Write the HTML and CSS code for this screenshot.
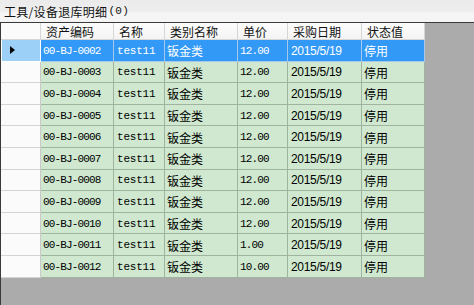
FILE: index.html
```html
<!DOCTYPE html>
<html lang="zh-CN">
<head>
  <meta charset="UTF-8">
  <title>工具/设备退库明细</title>
  <link rel="stylesheet" href="styles.css">
</head>
<body>
  <!-- Title bar -->
  <div class="title-bar">工具/设备退库明细<span class="count">(0)</span></div>

  <!-- Data grid -->
  <div class="grid">
    <div class="row header-row">
      <div class="row-head"></div>
      <div class="cell">资产编码</div>
      <div class="cell">名称</div>
      <div class="cell">类别名称</div>
      <div class="cell">单价</div>
      <div class="cell">采购日期</div>
      <div class="cell">状态值</div>
    </div>

    <div class="row data-row selected">
      <div class="row-head"><span class="pointer"></span></div>
      <div class="cell code">00-BJ-0002</div>
      <div class="cell name">test11</div>
      <div class="cell">钣金类</div>
      <div class="cell code">12.00</div>
      <div class="cell date">2015/5/19</div>
      <div class="cell">停用</div>
    </div>
    <div class="row data-row">
      <div class="row-head"></div>
      <div class="cell code">00-BJ-0003</div>
      <div class="cell name">test11</div>
      <div class="cell">钣金类</div>
      <div class="cell code">12.00</div>
      <div class="cell date">2015/5/19</div>
      <div class="cell">停用</div>
    </div>
    <div class="row data-row">
      <div class="row-head"></div>
      <div class="cell code">00-BJ-0004</div>
      <div class="cell name">test11</div>
      <div class="cell">钣金类</div>
      <div class="cell code">12.00</div>
      <div class="cell date">2015/5/19</div>
      <div class="cell">停用</div>
    </div>
    <div class="row data-row">
      <div class="row-head"></div>
      <div class="cell code">00-BJ-0005</div>
      <div class="cell name">test11</div>
      <div class="cell">钣金类</div>
      <div class="cell code">12.00</div>
      <div class="cell date">2015/5/19</div>
      <div class="cell">停用</div>
    </div>
    <div class="row data-row">
      <div class="row-head"></div>
      <div class="cell code">00-BJ-0006</div>
      <div class="cell name">test11</div>
      <div class="cell">钣金类</div>
      <div class="cell code">12.00</div>
      <div class="cell date">2015/5/19</div>
      <div class="cell">停用</div>
    </div>
    <div class="row data-row">
      <div class="row-head"></div>
      <div class="cell code">00-BJ-0007</div>
      <div class="cell name">test11</div>
      <div class="cell">钣金类</div>
      <div class="cell code">12.00</div>
      <div class="cell date">2015/5/19</div>
      <div class="cell">停用</div>
    </div>
    <div class="row data-row">
      <div class="row-head"></div>
      <div class="cell code">00-BJ-0008</div>
      <div class="cell name">test11</div>
      <div class="cell">钣金类</div>
      <div class="cell code">12.00</div>
      <div class="cell date">2015/5/19</div>
      <div class="cell">停用</div>
    </div>
    <div class="row data-row">
      <div class="row-head"></div>
      <div class="cell code">00-BJ-0009</div>
      <div class="cell name">test11</div>
      <div class="cell">钣金类</div>
      <div class="cell code">12.00</div>
      <div class="cell date">2015/5/19</div>
      <div class="cell">停用</div>
    </div>
    <div class="row data-row">
      <div class="row-head"></div>
      <div class="cell code">00-BJ-0010</div>
      <div class="cell name">test11</div>
      <div class="cell">钣金类</div>
      <div class="cell code">12.00</div>
      <div class="cell date">2015/5/19</div>
      <div class="cell">停用</div>
    </div>
    <div class="row data-row">
      <div class="row-head"></div>
      <div class="cell code">00-BJ-0011</div>
      <div class="cell name">test11</div>
      <div class="cell">钣金类</div>
      <div class="cell code">1.00</div>
      <div class="cell date">2015/5/19</div>
      <div class="cell">停用</div>
    </div>
    <div class="row data-row">
      <div class="row-head"></div>
      <div class="cell code">00-BJ-0012</div>
      <div class="cell name">test11</div>
      <div class="cell">钣金类</div>
      <div class="cell code">10.00</div>
      <div class="cell date">2015/5/19</div>
      <div class="cell">停用</div>
    </div>
  </div>
</body>
</html>
```

FILE: styles.css
```css
* {
  margin: 0;
  padding: 0;
  box-sizing: border-box;
}

body {
  width: 474px;
  height: 305px;
  overflow: hidden;
  font-family: "Noto Sans CJK SC", "Liberation Sans", sans-serif;
  font-size: 12px;
  color: #000;
  background-color: #ababab;
  display: flex;
  flex-direction: column;
}

.title-bar {
  height: 22px;
  padding-left: 4px;
  display: flex;
  align-items: center;
  background: linear-gradient(#ebebeb 0, #eeeeee 55%, #f6f6f6 58%, #f4f4f4 100%);
  color: #111;
  letter-spacing: 0.3px;
}

.count {
  font-family: "Liberation Mono", monospace;
  font-size: 11px;
  padding-left: 1px;
}

.grid {
  flex-grow: 1;
  border-top: 1px solid #3a3a3a;
  border-left: 1px solid #3a3a3a;
  background-color: #ababab;
  display: flex;
  flex-direction: column;
}

.row {
  display: grid;
  grid-template-columns: 40px 73px 51px 73px 50px 74px 63px;
  width: 424px;
}

.header-row {
  height: 17px;
  background: linear-gradient(#fdfdfd, #f3f3f3);
}

.header-row .cell,
.header-row .row-head {
  border-right: 1px solid #d6d6d6;
  border-bottom: 1px solid #d6d6d6;
  padding-left: 5px;
}

.header-row .cell {
  color: #111;
}

.cell {
  display: flex;
  align-items: center;
  padding-left: 2px;
  padding-top: 1px;
  white-space: nowrap;
  overflow: hidden;
}

.data-row {
  height: 21.6px;
  background-color: #cfe8cf;
}

.data-row .cell {
  border-right: 1px solid #9fb39f;
  border-bottom: 1px solid #9fb39f;
}

.row-head {
  background-color: #fbfbfb;
  border-right: 1px solid #c9c9c9;
  border-bottom: 1px solid #d4d4d4;
  display: flex;
  align-items: center;
}

.code {
  font-family: "Liberation Mono", monospace;
  font-size: 11px;
  letter-spacing: -0.85px;
}

.date {
  font-family: "Liberation Sans", sans-serif;
  font-size: 12px;
  letter-spacing: -0.3px;
  padding-left: 3px;
}

.name {
  font-family: "Liberation Mono", monospace;
  font-size: 11px;
  padding-left: 3px;
  letter-spacing: -0.2px;
}

.selected .cell {
  background-color: #3399f7;
  color: #fff;
  border-right-color: #a6c8ea;
  border-bottom-color: #a6c8ea;
}

.selected .row-head {
  background-color: #9dd0f6;
  border: 1px solid #ffffff;
  border-top: none;
}

.pointer {
  margin-left: 8px;
  width: 0;
  height: 0;
  border-top: 4px solid transparent;
  border-bottom: 4px solid transparent;
  border-left: 5px solid #000;
}
```
